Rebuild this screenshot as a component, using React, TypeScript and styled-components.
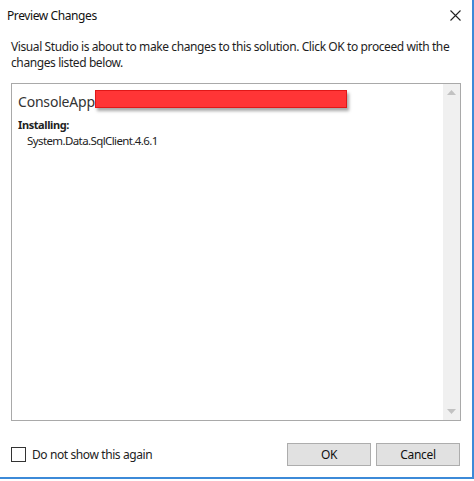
import React from 'react';
import styled, { createGlobalStyle } from 'styled-components';

const GlobalStyle = createGlobalStyle`
	html, body {
		margin: 0;
		padding: 0;
		background: #ffffff;
	}
	body {
		font-family: 'Noto Sans', 'Open Sans', sans-serif;
		color: #1e1e1e;
		letter-spacing: -0.4px;
	}
`;

const Window = styled.div`
	box-sizing: border-box;
	width: 474px;
	height: 479px;
	background: #ffffff;
	border-right: 2px solid #3c8ad8;
	border-bottom: 2px solid #3c8ad8;
	display: flex;
	flex-direction: column;
`;

const TitleBar = styled.div`
	height: 30px;
	display: flex;
	flex-direction: row;
	align-items: center;
	justify-content: space-between;
	padding: 0 10px 0 7px;
`;

const Title = styled.span`
	font-size: 12px;
	color: #111;
`;

const CloseButton = styled.div`
	width: 14px;
	height: 14px;
	display: flex;
	align-items: center;
	justify-content: center;
`;

const Message = styled.p`
	margin: 9px 0 0 0;
	padding: 0 11px;
	font-size: 12px;
	line-height: 16px;
	color: #1e1e1e;
`;

const ListBox = styled.div`
	box-sizing: border-box;
	margin: 12px 0 0 11px;
	width: 450px;
	height: 338px;
	border: 1px solid #a9a9a9;
	display: flex;
	flex-direction: row;
`;

const ListContent = styled.div`
	flex: 1;
	padding: 7px 6px;
`;

const ProjectRow = styled.div`
	display: flex;
	flex-direction: row;
	align-items: center;
	height: 20px;
`;

const ProjectName = styled.span`
	font-size: 14px;
	color: #333;
	letter-spacing: -0.2px;
`;

const Redaction = styled.div`
	width: 250px;
	height: 16px;
	background: #ff3536;
	border: 1px solid #e01818;
	box-shadow: 2px 3px 3px rgba(0, 0, 0, 0.35);
	margin-top: -4px;
`;

const SectionLabel = styled.div`
	margin-top: 6px;
	font-size: 11px;
	font-weight: 700;
	line-height: 16px;
	letter-spacing: -0.4px;
	color: #222;
`;

const PackageItem = styled.div`
	padding-left: 9px;
	font-size: 11.5px;
	line-height: 16px;
	letter-spacing: -0.6px;
	color: #222;
`;

const ScrollBar = styled.div`
	width: 17px;
	background: #f0f0f0;
	display: flex;
	flex-direction: column;
	justify-content: space-between;
	align-items: center;
	padding: 6px 0;
`;

const Footer = styled.div`
	display: flex;
	flex-direction: row;
	align-items: center;
	justify-content: space-between;
	padding: 0 12px 0 11px;
	margin-top: 22px;
`;

const CheckRow = styled.label`
	display: flex;
	flex-direction: row;
	align-items: center;
	gap: 6px;
	font-size: 12px;
	color: #222;
`;

const CheckBox = styled.span`
	box-sizing: border-box;
	width: 15px;
	height: 15px;
	border: 1px solid #333;
	background: #fff;
`;

const Buttons = styled.div`
	display: flex;
	flex-direction: row;
	gap: 5px;
`;

const Button = styled.button`
	box-sizing: border-box;
	width: 84px;
	height: 23px;
	background: #e1e1e1;
	border: 1px solid #adadad;
	font-family: 'Noto Sans', 'Open Sans', sans-serif;
	font-size: 12px;
	letter-spacing: -0.3px;
	color: #111;
	padding: 0;
`;

const Arrow: React.FC<{ up?: boolean }> = ({ up }) => (
	<svg width="9" height="5" viewBox="0 0 9 5">
		<path d={up ? 'M0 5 L4.5 0 L9 5 Z' : 'M0 0 L4.5 5 L9 0 Z'} fill="#c2c2c2" />
	</svg>
);

export default function App() {
	return (
		<>
			<GlobalStyle />
			<Window>
				<TitleBar>
					<Title>Preview Changes</Title>
					<CloseButton>
						<svg width="11" height="11" viewBox="0 0 11 11">
							<path d="M0.5 0.5 L10.5 10.5 M10.5 0.5 L0.5 10.5" stroke="#222" strokeWidth="1.1" />
						</svg>
					</CloseButton>
				</TitleBar>

				<Message>
					Visual Studio is about to make changes to this solution. Click OK to proceed with the changes
					listed below.
				</Message>

				<ListBox>
					<ListContent>
						<ProjectRow>
							<ProjectName>ConsoleApp</ProjectName>
							<Redaction />
						</ProjectRow>
						<SectionLabel>Installing:</SectionLabel>
						<PackageItem>System.Data.SqlClient.4.6.1</PackageItem>
					</ListContent>
					<ScrollBar>
						<Arrow up />
						<Arrow />
					</ScrollBar>
				</ListBox>

				<Footer>
					<CheckRow>
						<CheckBox />
						Do not show this again
					</CheckRow>
					<Buttons>
						<Button>OK</Button>
						<Button>Cancel</Button>
					</Buttons>
				</Footer>
			</Window>
		</>
	);
}
